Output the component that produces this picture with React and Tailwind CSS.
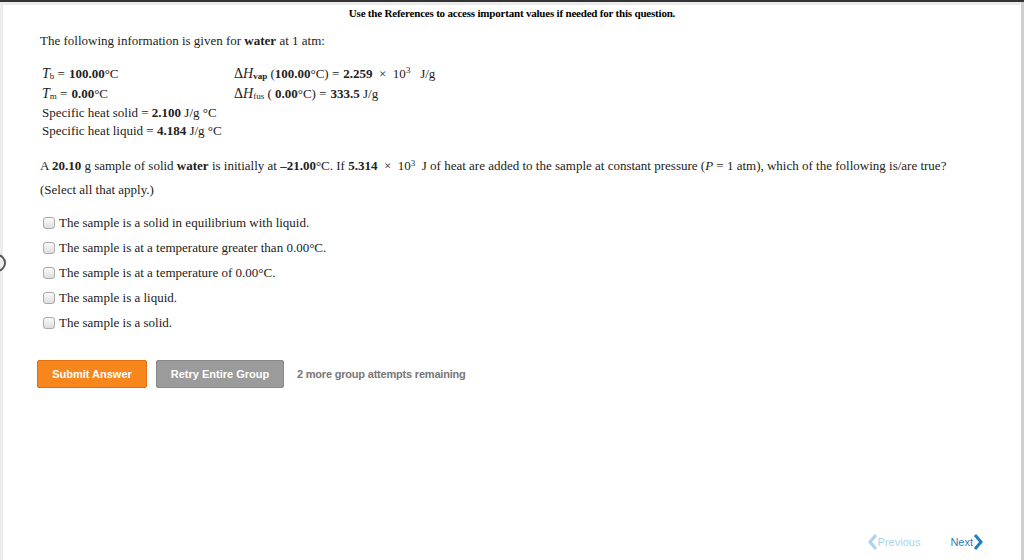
import React from 'react';

const options = [
  'The sample is a solid in equilibrium with liquid.',
  'The sample is at a temperature greater than 0.00°C.',
  'The sample is at a temperature of 0.00°C.',
  'The sample is a liquid.',
  'The sample is a solid.',
];

function Box() {
  return (
    <span className="inline-block w-[12px] h-[12px] rounded-[3px] border border-[#a9a9a9] bg-gradient-to-b from-[#fbfbfb] to-[#dedede] shrink-0" />
  );
}

export default function App() {
  return (
    <div className="relative w-[1024px] h-[560px] overflow-hidden bg-white font-['Liberation_Serif',serif] text-[#222]">
      <div className="h-[2px] bg-[#333]" />
      <div className="flex h-[558px]">
        <div className="w-[3px] bg-[#ececec]" />
        <div className="flex-1 flex flex-col border-t-[3px] border-[#ececec]">
          {/* references note */}
          <div className="h-[15px] pt-[2px] flex items-center justify-center">
            <span className="text-[11px] font-bold text-black tracking-[-0.2px]">
              Use the References to access important values if needed for this question.
            </span>
          </div>

          <div className="pl-[37px] pt-[13px] text-[13px] leading-[16px]">
            <p>The following information is given for <b>water</b> at 1 atm:</p>

            <div className="mt-[15px] grid grid-cols-[192px_1fr] ml-[2px] text-[13px]">
              <div className="h-[20px] flex items-center">
                <i className="text-[14px]">T</i><sub className="text-[9px]">b</sub>&nbsp;= <b className="ml-1">100.00</b>°C
              </div>
              <div className="h-[20px] flex items-center">
                <span className="text-[14px]">Δ<i>H</i></span><sub className="text-[9px] font-bold">vap</sub>&nbsp;(<b>100.00</b>°C) = <b className="ml-1">2.259</b>&nbsp;&nbsp;×&nbsp;&nbsp;10<sup className="text-[9px]">3</sup>&nbsp;&nbsp;&nbsp;J/g
              </div>
              <div className="h-[19px] flex items-center">
                <i className="text-[14px]">T</i><sub className="text-[9px]">m</sub>&nbsp;= <b className="ml-1">0.00</b>°C
              </div>
              <div className="h-[19px] flex items-center">
                <span className="text-[14px]">Δ<i>H</i></span><sub className="text-[9px]">fus</sub>&nbsp;(&nbsp;<b>0.00</b>°C) = <b className="ml-1">333.5</b>&nbsp;J/g
              </div>
              <div className="col-span-2 h-[19px] flex items-center">
                Specific heat solid =&nbsp;<b>2.100</b>&nbsp;J/g °C
              </div>
              <div className="col-span-2 h-[18px] flex items-center">
                Specific heat liquid =&nbsp;<b>4.184</b>&nbsp;J/g °C
              </div>
            </div>

            <p className="mt-[18px]">
              A <b>20.10</b> g sample of solid <b>water</b> is initially at <b>–21.00</b>°C. If <b>5.314</b>&nbsp; ×&nbsp; 10<sup className="text-[9px]">3</sup>&nbsp; J of heat are added to the sample at constant pressure (<i>P</i> = 1 atm), which of the following is/are true?
            </p>
            <p className="mt-[8px]">(Select all that apply.)</p>

            <div className="mt-[17px] flex flex-col gap-[9px]">
              {options.map((o) => (
                <label key={o} className="flex items-center gap-[4px] ml-[3px]">
                  <Box />
                  <span>{o}</span>
                </label>
              ))}
            </div>

            <div className="mt-[29px] -ml-[3px] flex items-center font-['Liberation_Sans',Arial,sans-serif] text-[11px] font-bold">
              <button className="w-[110px] h-[28px] rounded-[2px] bg-[#f7861c] border border-[#e06f10] text-white">
                Submit Answer
              </button>
              <button className="ml-[9px] w-[128px] h-[28px] rounded-[2px] bg-[#9b9b9b] border border-[#888] text-white">
                Retry Entire Group
              </button>
              <span className="ml-[13px] text-[#777] tracking-[-0.2px]">2 more group attempts remaining</span>
            </div>
          </div>

          <div className="mt-auto mb-[10px] flex justify-end items-center gap-[30px] pr-[38px] font-['Liberation_Sans',Arial,sans-serif] text-[11px]">
            <span className="flex items-center text-[#a9d3ee]">
              <svg width="10" height="16" viewBox="0 0 10 16"><path d="M8 1 L2 8 L8 15" fill="none" stroke="#a9d3ee" strokeWidth="3" /></svg>
              Previous
            </span>
            <span className="flex items-center text-[#1f7fc0]">
              Next
              <svg width="10" height="16" viewBox="0 0 10 16"><path d="M2 1 L8 8 L2 15" fill="none" stroke="#1f7fc0" strokeWidth="3" /></svg>
            </span>
          </div>
        </div>
        <div className="w-[3px] bg-[#cfcfcf]" />
      </div>

      {/* partial circle on left edge */}
      <div className="absolute left-[-12px] top-[254px] w-[18px] h-[18px] rounded-full border-2 border-[#555]" />
    </div>
  );
}
